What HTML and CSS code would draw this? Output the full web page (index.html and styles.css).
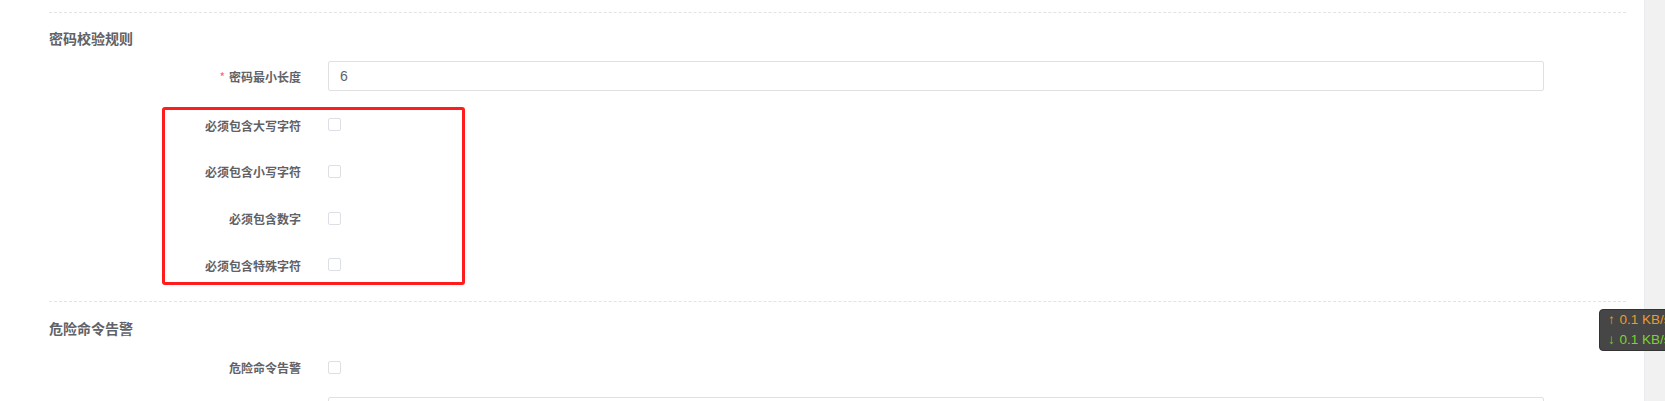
FILE: index.html
```html
<!DOCTYPE html>
<html lang="zh-CN">
<head>
<meta charset="utf-8">
<title>密码校验规则</title>
<link rel="stylesheet" href="styles.css">
</head>
<body>
<div class="page">
  <div class="content">
    <div class="divider"></div>
    <div class="section-title">密码校验规则</div>
    <div class="form-item item-input">
      <label class="label"><span class="req">*</span>密码最小长度</label>
      <div class="control"><div class="input">6</div></div>
    </div>
    <div class="form-item cb-first">
      <label class="label">必须包含大写字符</label>
      <div class="control"><span class="checkbox"></span></div>
    </div>
    <div class="form-item cb">
      <label class="label">必须包含小写字符</label>
      <div class="control"><span class="checkbox"></span></div>
    </div>
    <div class="form-item cb">
      <label class="label">必须包含数字</label>
      <div class="control"><span class="checkbox"></span></div>
    </div>
    <div class="form-item cb">
      <label class="label">必须包含特殊字符</label>
      <div class="control"><span class="checkbox"></span></div>
    </div>
    <div class="divider divider-2"></div>
    <div class="section-title title-2">危险命令告警</div>
    <div class="form-item cb-after-title">
      <label class="label">危险命令告警</label>
      <div class="control"><span class="checkbox"></span></div>
    </div>
    <div class="form-item item-input item-last">
      <label class="label"></label>
      <div class="control"><div class="input"></div></div>
    </div>

    <div class="highlight"></div>
  </div>
  <div class="scrollbar"></div>
  <div class="netspeed">
    <div class="up"><span class="arrow">↑</span> 0.1 KB/s</div>
    <div class="down"><span class="arrow">↓</span> 0.1 KB/s</div>
  </div>
</div>
</body>
</html>
```
FILE: styles.css
```css
html, body {
  margin: 0;
  padding: 0;
  background: #ffffff;
}
body {
  font-family: "Noto Sans CJK SC", "Noto Sans", "Liberation Sans", sans-serif;
  color: #606266;
}
.page {
  position: relative;
  display: flex;
  width: 1665px;
  height: 401px;
  overflow: hidden;
}
.content {
  position: relative;
  flex: 1;
  overflow: hidden;
  padding: 12px 18px 0 49px;
  box-sizing: border-box;
}
.scrollbar {
  width: 21px;
  flex: none;
  background: #f1f1f1;
  border-left: 1px solid #e9ebf1;
  box-sizing: border-box;
}
.divider {
  height: 0;
  border-top: 1px dashed #e3e3e3;
}
.divider-2 {
  margin-top: 21.6px;
}
.section-title {
  margin-top: 15px;
  height: 20px;
  line-height: 20px;
  font-size: 14px;
  font-weight: 700;
  color: #5f6266;
}
.title-2 {
  margin-top: 15.7px;
}
.form-item {
  display: flex;
  align-items: center;
  height: 30px;
}
.item-input {
  margin-top: 13px;
}
.cb-first {
  margin-top: 18.7px;
}
.cb {
  margin-top: 16.7px;
}
.cb-after-title {
  margin-top: 14.3px;
}
.item-last {
  margin-top: 15px;
}
.label {
  width: 252px;
  flex: none;
  text-align: right;
  font-size: 12px;
  font-weight: 700;
  line-height: 30px;
  padding-top: 2px;
  box-sizing: border-box;
  color: #5f6266;
}
.req {
  color: #f56c6c;
  font-weight: 400;
  margin-right: 4px;
}
.control {
  margin-left: 27px;
  display: flex;
  align-items: center;
}
.input {
  width: 1216px;
  height: 30px;
  box-sizing: border-box;
  border: 1px solid #e1e1e1;
  border-radius: 2px;
  padding-left: 11px;
  font-size: 14px;
  line-height: 28px;
  color: #5f6266;
  font-family: "Liberation Sans", "Noto Sans CJK SC", sans-serif;
}
.checkbox {
  display: block;
  width: 13px;
  height: 13px;
  box-sizing: border-box;
  border: 1px solid #dcdfe6;
  border-radius: 2px;
  background: #fff;
}
.highlight {
  position: absolute;
  left: 162px;
  top: 107px;
  width: 303px;
  height: 178px;
  box-sizing: border-box;
  border: 3px solid #ff1c1c;
  border-radius: 3px;
}
.netspeed {
  position: absolute;
  left: 1599px;
  top: 309px;
  width: 90px;
  height: 42px;
  box-sizing: border-box;
  padding: 0 0 0 8px;
  background: #464646;
  border: 1px solid #333;
  border-radius: 4px;
  font-family: "Liberation Sans", "Noto Sans", sans-serif;
  font-size: 13.5px;
  line-height: 19.5px;
  white-space: nowrap;
}
.arrow {
  margin-right: 1px;
}
.up {
  color: #e99b2d;
}
.down {
  color: #7ed12f;
}
```
